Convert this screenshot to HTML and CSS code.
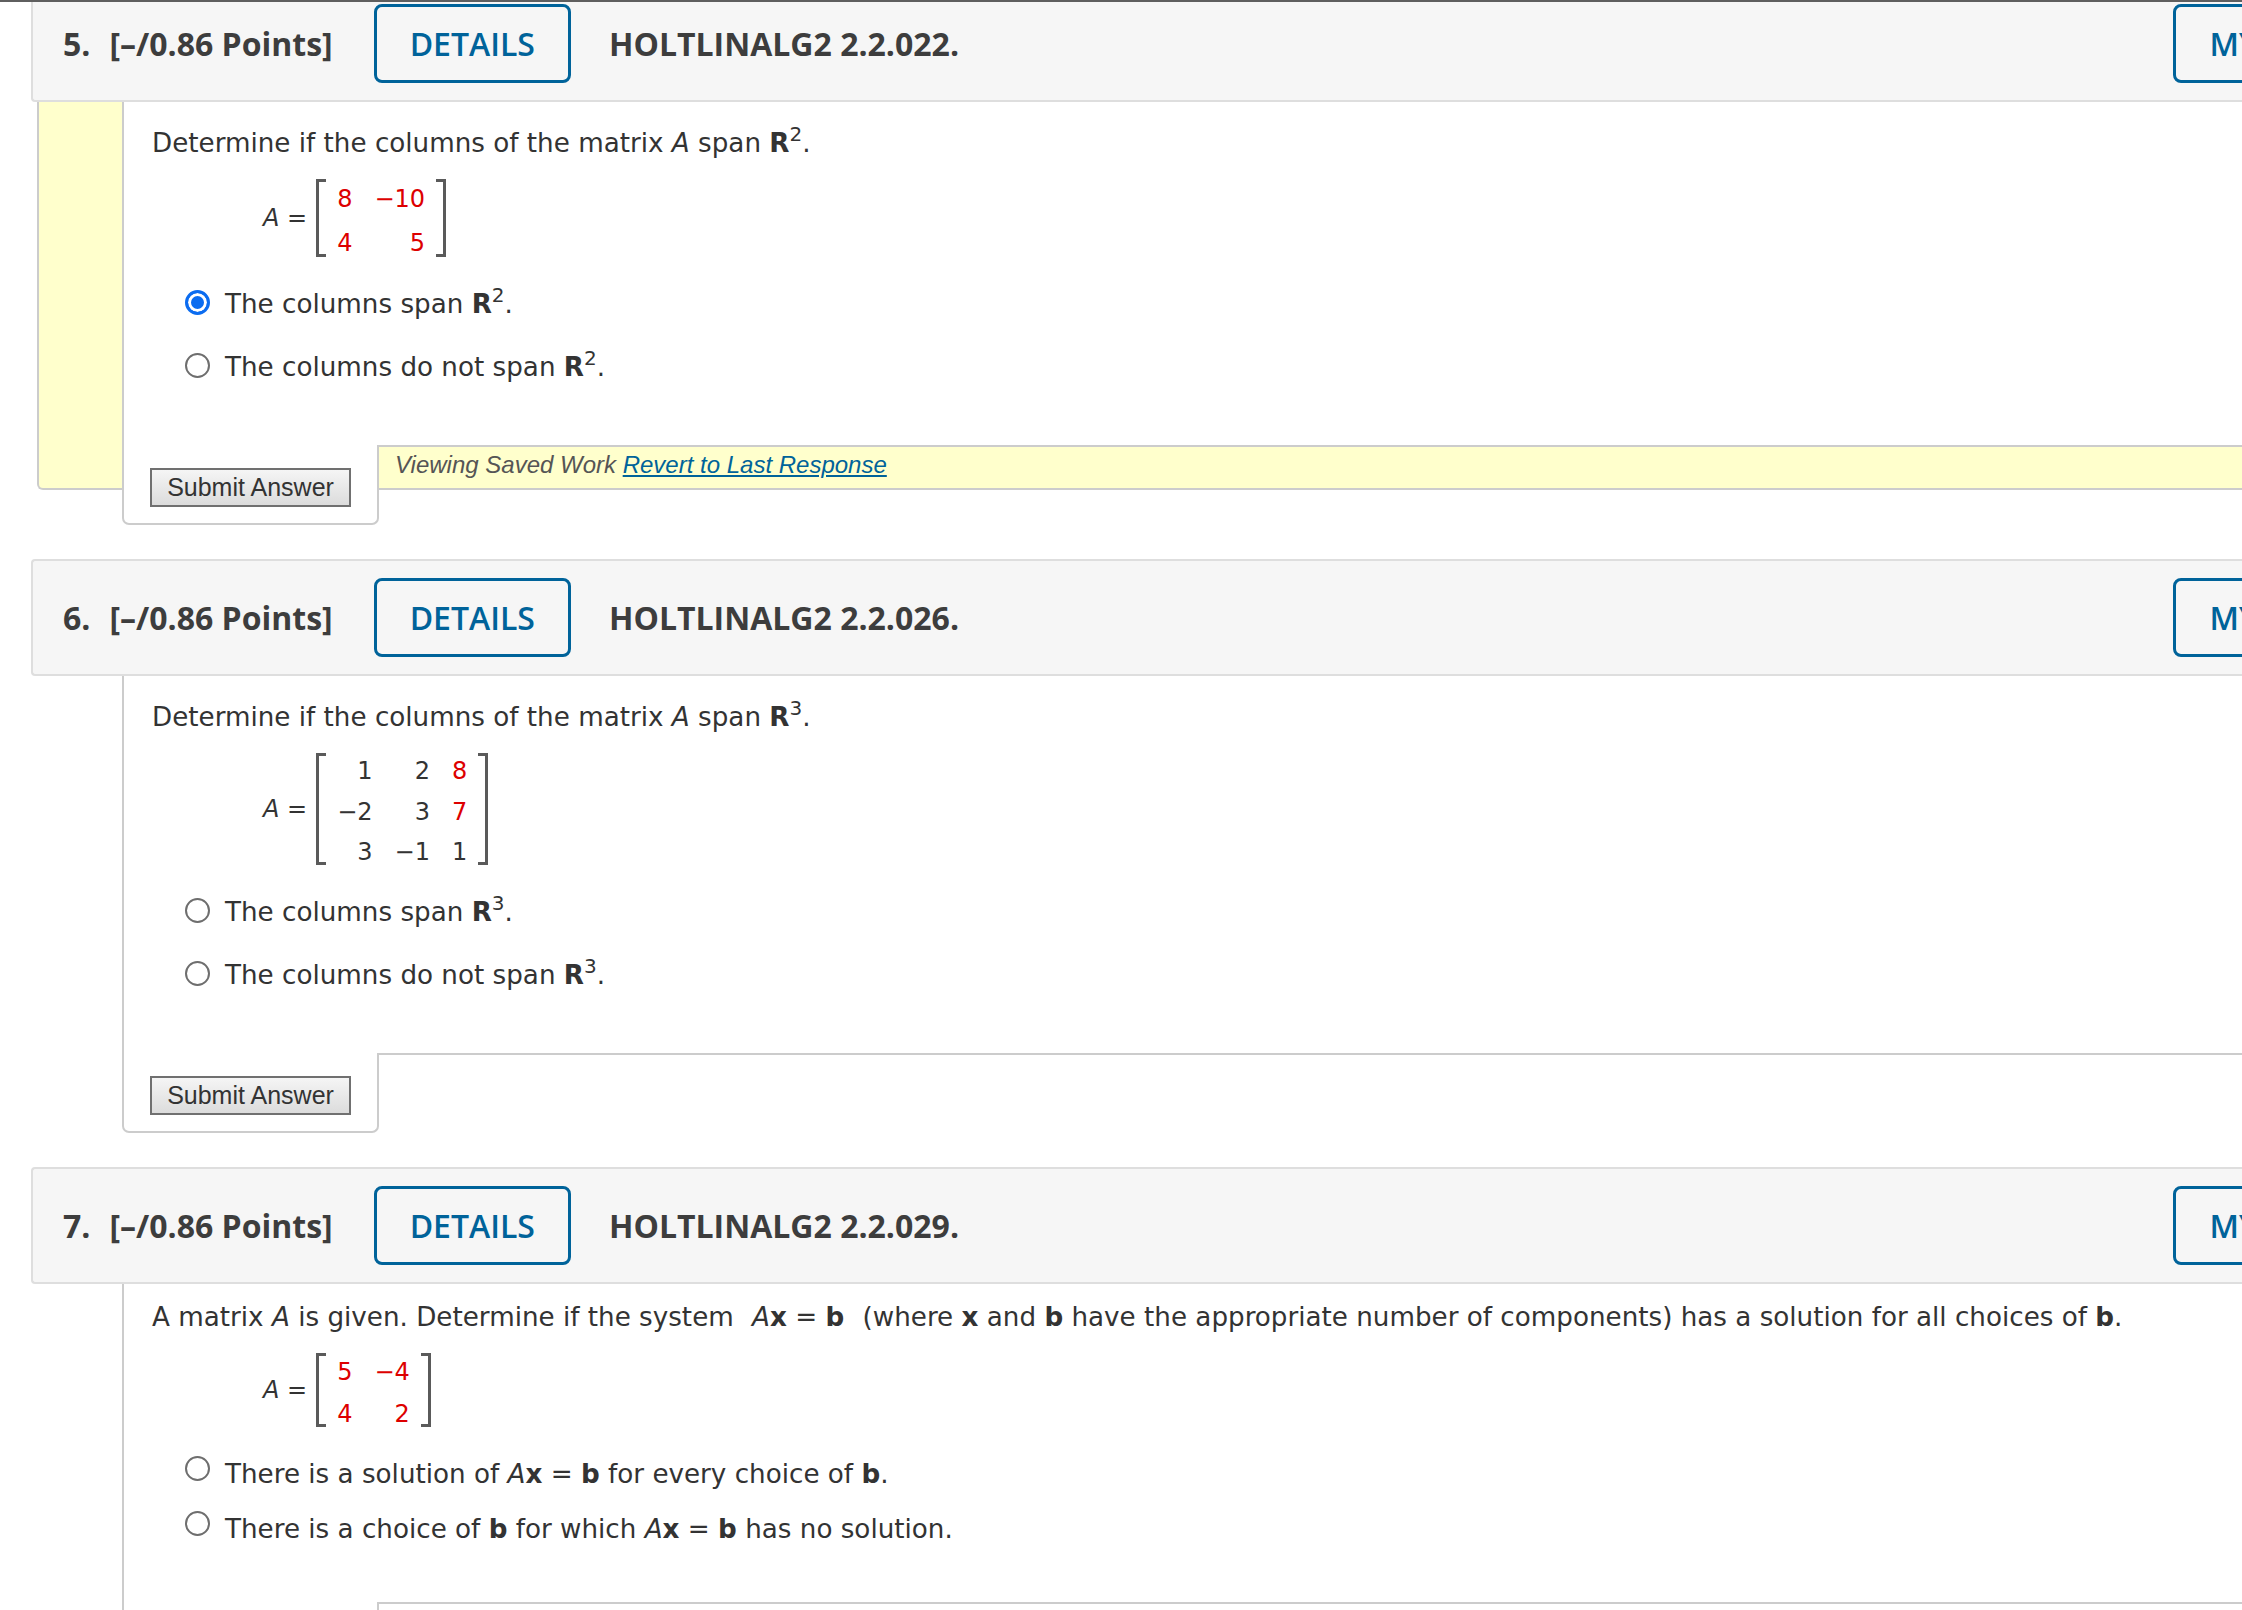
FILE: index.html
```html
<!DOCTYPE html>
<html lang="en">
<head>
<meta charset="utf-8">
<title>Questions</title>
<link rel="stylesheet" href="styles.css">
</head>
<body>
<div class="topline"></div>
<main class="page">

  <section class="q">
    <header class="q-head">
      <span class="q-num">5.</span>
      <span class="q-pts">[–/0.86 Points]</span>
      <button class="hbtn">DETAILS</button>
      <span class="q-code">HOLTLINALG2 2.2.022.</span>
      <button class="hbtn notes">MY NOTES</button>
    </header>
    <div class="q-body saved">
      <div class="q-content">
        <p class="q-text">Determine if the columns of the matrix <i>A</i> span <b>R</b><sup>2</sup>.</p>
        <div class="mat-line">
          <span class="mat-lhs"><i>A</i> =</span>
          <span class="brk l"></span>
          <div class="mat c2 lh44">
            <span class="red">8</span><span class="red">−10</span>
            <span class="red">4</span><span class="red">5</span>
          </div>
          <span class="brk r"></span>
        </div>
        <div class="opts">
          <label class="opt"><input type="radio" name="q5" checked><span>The columns span <b>R</b><sup>2</sup>.</span></label>
          <label class="opt"><input type="radio" name="q5"><span>The columns do not span <b>R</b><sup>2</sup>.</span></label>
        </div>
      </div>
      <div class="q-foot">
        <div class="tab"><button class="submit">Submit Answer</button></div>
        <div class="bar">Viewing Saved Work <a href="#">Revert to Last Response</a></div>
      </div>
    </div>
  </section>

  <section class="q">
    <header class="q-head">
      <span class="q-num">6.</span>
      <span class="q-pts">[–/0.86 Points]</span>
      <button class="hbtn">DETAILS</button>
      <span class="q-code">HOLTLINALG2 2.2.026.</span>
      <button class="hbtn notes">MY NOTES</button>
    </header>
    <div class="q-body">
      <div class="q-content">
        <p class="q-text">Determine if the columns of the matrix <i>A</i> span <b>R</b><sup>3</sup>.</p>
        <div class="mat-line">
          <span class="mat-lhs"><i>A</i> =</span>
          <span class="brk l"></span>
          <div class="mat c3 lh40">
            <span>1</span><span>2</span><span class="red">8</span>
            <span>−2</span><span>3</span><span class="red">7</span>
            <span>3</span><span>−1</span><span>1</span>
          </div>
          <span class="brk r"></span>
        </div>
        <div class="opts">
          <label class="opt"><input type="radio" name="q6"><span>The columns span <b>R</b><sup>3</sup>.</span></label>
          <label class="opt"><input type="radio" name="q6"><span>The columns do not span <b>R</b><sup>3</sup>.</span></label>
        </div>
      </div>
      <div class="q-foot">
        <div class="tab"><button class="submit">Submit Answer</button></div>
        <div class="bar"></div>
      </div>
    </div>
  </section>

  <section class="q">
    <header class="q-head">
      <span class="q-num">7.</span>
      <span class="q-pts">[–/0.86 Points]</span>
      <button class="hbtn">DETAILS</button>
      <span class="q-code">HOLTLINALG2 2.2.029.</span>
      <button class="hbtn notes">MY NOTES</button>
    </header>
    <div class="q-body">
      <div class="q-content tight">
        <p class="q-text">A matrix <i>A</i> is given. Determine if the system <span class="eq"><i>A</i><b>x</b> = <b>b</b></span> (where <b>x</b> and <b>b</b> have the appropriate number of components) has a solution for all choices of <b>b</b>.</p>
        <div class="mat-line">
          <span class="mat-lhs"><i>A</i> =</span>
          <span class="brk l"></span>
          <div class="mat c2 lh42">
            <span class="red">5</span><span class="red">−4</span>
            <span class="red">4</span><span class="red">2</span>
          </div>
          <span class="brk r"></span>
        </div>
        <div class="opts close">
          <label class="opt"><input type="radio" name="q7"><span>There is a solution of <i>A</i><b>x</b> = <b>b</b> for every choice of <b>b</b>.</span></label>
          <label class="opt"><input type="radio" name="q7"><span>There is a choice of <b>b</b> for which <i>A</i><b>x</b> = <b>b</b> has no solution.</span></label>
        </div>
      </div>
      <div class="q-foot">
        <div class="tab"><button class="submit">Submit Answer</button></div>
        <div class="bar"></div>
      </div>
    </div>
  </section>

</main>
</body>
</html>
```

FILE: styles.css
```css
* { box-sizing: border-box; }

html, body {
  margin: 0;
  background: #fff;
}

body {
  overflow: hidden;
  font-family: "DejaVu Sans", Verdana, sans-serif;
  color: #333;
}

.topline {
  position: fixed;
  top: 0;
  left: 0;
  right: 0;
  height: 2px;
  background: #5f5f5f;
  z-index: 10;
}

.page {
  width: 2436px;
  padding-left: 31px;
  margin-top: -15px;
}

.q {
  margin-bottom: 69px;
}

/* ---------- header ---------- */
.q-head {
  display: flex;
  align-items: center;
  height: 117px;
  padding: 0 30px;
  background: #f6f6f6;
  border: 2px solid #dedede;
  border-right: none;
  border-radius: 4px 0 0 4px;
  font-family: "Open Sans", "DejaVu Sans", sans-serif;
  font-weight: 700;
  font-size: 32px;
  color: #3d3d3d;
}

.q-num {
  margin-right: 19px;
}

.hbtn {
  margin-left: 41px;
  height: 79px;
  padding: 0 33px;
  border: 3px solid #00639a;
  border-radius: 8px;
  background: transparent;
  color: #00639a;
  font-family: "Open Sans", "DejaVu Sans", sans-serif;
  font-weight: 600;
  font-size: 32px;
}

.q-code {
  margin-left: 38px;
}

.hbtn.notes {
  margin-left: auto;
}

/* ---------- body ---------- */
.q-body {
  margin-left: 6px;
  padding-left: 83px;
  border-left: 2px solid transparent;
  border-bottom: 2px solid transparent;
  border-bottom-left-radius: 6px;
}

.q-body.saved {
  background: #ffffcc;
  border-color: #cccccc;
}

.q-content {
  background: #fff;
  border-left: 2px solid #cccccc;
  padding: 22px 0 58px 28px;
  font-size: 26.2px;
  line-height: 39px;
}

.q-content.tight {
  padding-top: 14px;
  padding-bottom: 53px;
}

.q-text {
  margin: 0;
  white-space: nowrap;
}

.eq {
  margin: 0 10px;
}

sup {
  font-size: 20px;
  vertical-align: 11px;
  line-height: 0;
}

/* ---------- matrix ---------- */
.mat-line {
  display: flex;
  align-items: stretch;
  margin: 14px 0 0 111px;
  font-size: 24px;
}

.mat-lhs {
  align-self: center;
  margin: 0 9px 6px 0;
  line-height: 36px;
}

.brk {
  width: 10px;
  margin: 2px 0 8px;
  border: 3px solid #5a5a5a;
}

.brk.l { border-right: none; }
.brk.r { border-left: none; }

.mat {
  display: grid;
  column-gap: 22px;
  justify-items: end;
  padding: 0 11px;
}

.mat.c2 { grid-template-columns: auto auto; }
.mat.c3 { grid-template-columns: auto auto auto; }
.mat.lh44 { line-height: 44px; }
.mat.lh40 { line-height: 40.5px; }
.mat.lh42 { line-height: 42px; }

.red { color: #dd0000; }

/* ---------- options ---------- */
.opts {
  display: flex;
  flex-direction: column;
  gap: 24px;
  margin-top: 20px;
}

.opts.close {
  gap: 16px;
}

.opt {
  display: flex;
  align-items: flex-start;
  white-space: nowrap;
}

.opt input {
  appearance: none;
  -webkit-appearance: none;
  flex: none;
  width: 25px;
  height: 25px;
  margin: 5px 15px 0 33px;
  border: 2px solid #6e6e6e;
  border-radius: 50%;
  background: #fff;
}

.opts.close .opt input {
  margin-top: 1px;
}

.opt input:checked {
  border: 3px solid #0b6cf0;
  background: #0b6cf0;
  box-shadow: inset 0 0 0 3px #fff;
}

/* ---------- footer ---------- */
.q-foot {
  display: flex;
  align-items: flex-start;
}

.tab {
  flex: none;
  width: 257px;
  height: 80px;
  margin-bottom: -37px;
  padding: 23px 0 0 26px;
  background: #fff;
  border: 2px solid #cccccc;
  border-top: none;
  border-radius: 0 0 7px 7px;
}

.submit {
  display: block;
  width: 201px;
  height: 39px;
  padding: 0;
  border: 2px solid #707070;
  background: linear-gradient(#f5f5f5, #dcdcdc);
  font-family: "Liberation Sans", Arial, sans-serif;
  font-size: 25px;
  color: #333;
}

.bar {
  flex: 1;
  height: 43px;
  border-top: 2px solid #cccccc;
  padding: 4px 16px 0;
  font-family: "Liberation Sans", Arial, sans-serif;
  font-style: italic;
  font-size: 24px;
  line-height: 28px;
  color: #555;
}

.bar a {
  color: #00639a;
  text-decoration: underline;
}
```
